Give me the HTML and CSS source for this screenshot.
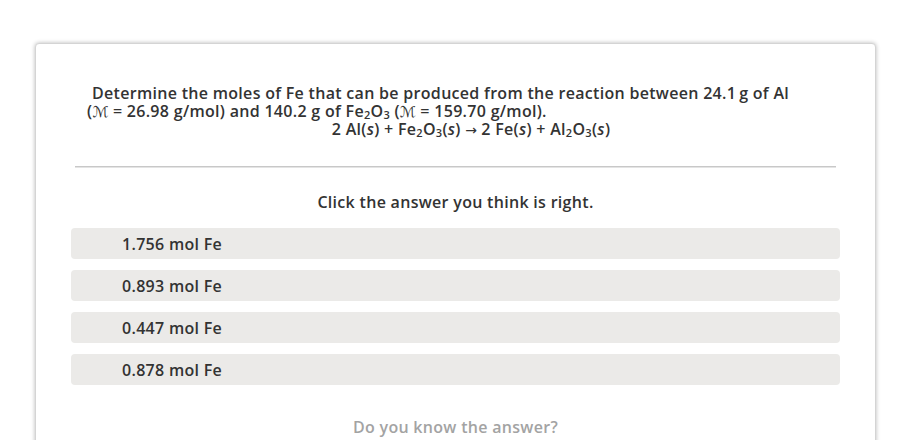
FILE: index.html
```html
<!DOCTYPE html>
<html>
<head>
<meta charset="utf-8">
<link rel="stylesheet" href="styles.css">
</head>
<body>
<div class="card">
  <div class="question">
    <p class="q-text">Determine the moles of Fe that can be produced from the reaction between 24.1&#8201;g of Al<br>(<span class="scriptm">ℳ</span> = 26.98 g/mol) and 140.2 g of Fe<sub>2</sub>O<sub>3</sub> (<span class="scriptm">ℳ</span> = 159.70 g/mol).</p>
    <p class="q-eq">2 Al(<i>s</i>) + Fe<sub>2</sub>O<sub>3</sub>(<i>s</i>) <span class="arrow">→</span> 2 Fe(<i>s</i>) + Al<sub>2</sub>O<sub>3</sub>(<i>s</i>)</p>
  </div>
  <div class="divider"></div>
  <p class="prompt">Click the answer you think is right.</p>
  <div class="options">
    <div class="option">1.756 mol Fe</div>
    <div class="option">0.893 mol Fe</div>
    <div class="option">0.447 mol Fe</div>
    <div class="option">0.878 mol Fe</div>
  </div>
  <p class="know">Do you know the answer?</p>
</div>
</body>
</html>
```
FILE: styles.css
```css
html, body {
  margin: 0;
  padding: 0;
  background: #ffffff;
  overflow: hidden;
}
body {
  font-family: "Open Sans", "Liberation Sans", sans-serif;
  font-weight: 600;
  color: #333333;
  font-size: 16px;
  letter-spacing: 0.3px;
}
p { margin: 0; }
.card {
  margin: 43px 0 0 35px;
  width: 841px;
  height: 460px;
  box-sizing: border-box;
  background: #fff;
  border-radius: 4px;
  border: 1px solid #d4d4d4;
  box-shadow: 0 0 4px rgba(0, 0, 0, 0.28);
  padding-top: 40px;
}
.question {
  padding: 0 20px 0 51px;
  line-height: 18px;
  white-space: nowrap;
}
.q-text {
  text-indent: 5px;
}
.q-eq {
  text-align: center;
}
sub {
  font-size: 11px;
  line-height: 0;
  vertical-align: -2px;
}
.scriptm {
  font-family: "DejaVu Sans", "DejaVu Serif", serif;
  font-weight: 400;
  font-size: 15px;
  line-height: 0;
  letter-spacing: 0;
}
.arrow {
  font-family: "DejaVu Sans", sans-serif;
  font-weight: 400;
  font-size: 14px;
  line-height: 0;
  letter-spacing: 0;
}
.divider {
  margin: 28px 39px 0 39px;
  height: 1px;
  background: #c8c8c8;
  border-bottom: 1px solid #e4e4e4;
}
.prompt {
  margin-top: 25px;
  text-align: center;
  line-height: 18px;
}
.options {
  margin: 17px 35px 0 35px;
  display: flex;
  flex-direction: column;
  gap: 11px;
}
.option {
  height: 31px;
  background: #ebeae8;
  border-radius: 4px;
  padding-left: 51px;
  display: flex;
  align-items: center;
  line-height: 18px;
}
.know {
  margin-top: 33px;
  text-align: center;
  color: #a3a3a3;
  line-height: 18px;
}
```
